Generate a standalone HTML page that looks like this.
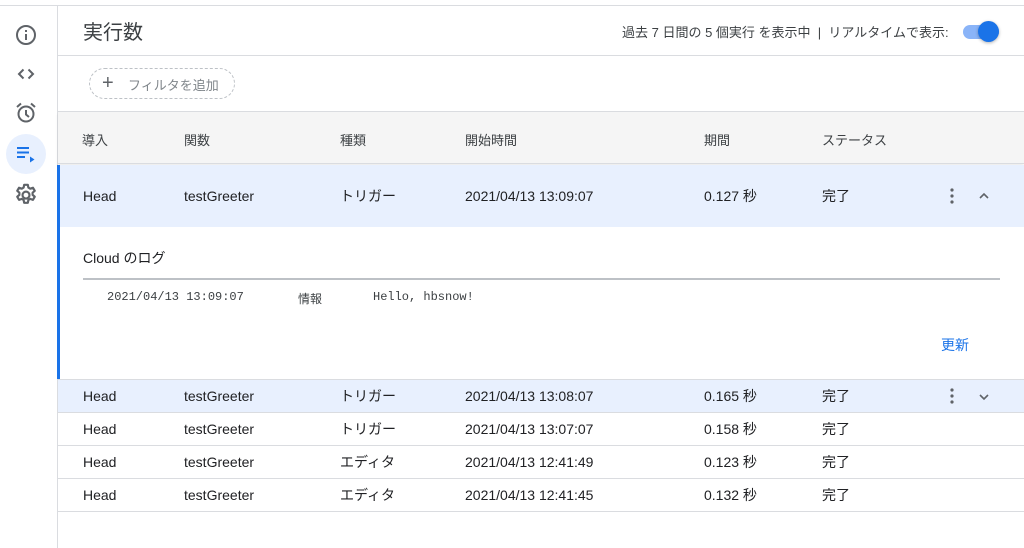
<!DOCTYPE html>
<html><head><meta charset="utf-8"><style>
*{box-sizing:border-box;margin:0;padding:0}
body{width:1024px;height:548px;background:#fff;font-family:"Liberation Sans","Noto Sans CJK JP",sans-serif;color:#202124;position:relative;overflow:hidden}
.abs{position:absolute}
.topline{left:0;top:5px;width:1024px;height:1px;background:#dadce0}
.side{left:57px;top:6px;width:1px;height:542px;background:#dadce0}
.t{position:absolute;font-size:14px;white-space:nowrap}
.hline{position:absolute;left:58px;width:966px;height:1px;background:#dadce0}
.ic{position:absolute}
</style></head><body>
<div class="abs topline"></div>
<div class="abs side"></div>
<svg class="ic" style="left:14px;top:23px" width="24" height="24" viewBox="0 0 24 24"><circle cx="12" cy="12" r="9" fill="none" stroke="#5f6368" stroke-width="2"/><rect x="11" y="11" width="2" height="6" fill="#5f6368"/><rect x="11" y="7" width="2" height="2" fill="#5f6368"/></svg>
<svg class="ic" style="left:14px;top:62px" width="24" height="24" viewBox="0 0 24 24"><path d="M9.5 7.5L5 12l4.5 4.5M14.5 7.5L19 12l-4.5 4.5" fill="none" stroke="#5f6368" stroke-width="2"/></svg>
<svg class="ic" style="left:14px;top:101px" width="24" height="24" viewBox="0 0 24 24"><circle cx="12" cy="13" r="7.5" fill="none" stroke="#5f6368" stroke-width="2"/><path d="M12 9v4.5l3 2.5M3 6l4-3.5M21 6l-4-3.5" fill="none" stroke="#5f6368" stroke-width="2"/></svg>
<div class="abs" style="left:6px;top:134px;width:40px;height:40px;border-radius:50%;background:#e8f0fe"></div>
<svg class="ic" style="left:14px;top:142px" width="24" height="24" viewBox="0 0 24 24"><path d="M3 6h12M3 10.5h12M3 15h8" stroke="#1a73e8" stroke-width="2"/><path d="M16 14.5v6l4.5-3z" fill="#1a73e8"/></svg>
<svg class="ic" style="left:13px;top:181px" width="26" height="26" viewBox="0 0 24 24"><g fill="none" stroke="#5f6368" stroke-width="2" stroke-linejoin="round"><path d="M10.3 2.5h3.4l.5 2.6 1.7 1 2.5-.9 1.7 2.9-2 1.7v2l2 1.7-1.7 2.9-2.5-.9-1.7 1-.5 2.6h-3.4l-.5-2.6-1.7-1-2.5.9-1.7-2.9 2-1.7v-2l-2-1.7 1.7-2.9 2.5.9 1.7-1z" transform="translate(0,1)"/><circle cx="12" cy="13" r="3.2"/></g></svg>
<div class="t" style="left:83px;top:16px;font-size:20px;color:#3c4043">実行数</div>
<div class="t" style="left:622px;top:22px;font-size:13px;color:#3c4043">過去 7 日間の 5 個実行 を表示中 &nbsp;| &nbsp;リアルタイムで表示:</div>
<div class="abs" style="left:963px;top:25px;width:36px;height:14px;border-radius:7px;background:#8ab4f8"></div>
<div class="abs" style="left:978px;top:21px;width:21px;height:21px;border-radius:50%;background:#1a73e8;box-shadow:0 1px 3px rgba(0,0,0,.3)"></div>
<div class="hline" style="top:55px"></div>
<div class="abs" style="left:89px;top:68px;width:146px;height:31px;border:1px dashed #bdc1c6;border-radius:16px"></div>
<div class="t" style="left:102px;top:72px;font-size:20px;color:#5f6368;font-weight:300">+</div>
<div class="t" style="left:128px;top:75px;font-size:13px;color:#80868b">フィルタを追加</div>
<div class="hline" style="top:111px"></div>
<div class="abs" style="left:58px;top:112px;width:966px;height:52px;background:#f5f5f5;border-bottom:1px solid #dadce0;box-shadow:0 2px 3px rgba(0,0,0,.08)"></div>
<div class="t" style="left:82px;top:130px;font-size:13px;color:#3c4043">導入</div>
<div class="t" style="left:184px;top:130px;font-size:13px;color:#3c4043">関数</div>
<div class="t" style="left:340px;top:130px;font-size:13px;color:#3c4043">種類</div>
<div class="t" style="left:465px;top:130px;font-size:13px;color:#3c4043">開始時間</div>
<div class="t" style="left:704px;top:130px;font-size:13px;color:#3c4043">期間</div>
<div class="t" style="left:822px;top:130px;font-size:13px;color:#3c4043">ステータス</div>
<div class="abs" style="left:58px;top:165px;width:966px;height:62px;background:#e8f0fe"></div>
<div class="abs" style="left:57px;top:165px;width:3px;height:214px;background:#1a73e8"></div>
<div class="t" style="left:83px;top:188px">Head</div>
<div class="t" style="left:184px;top:188px">testGreeter</div>
<div class="t" style="left:340px;top:186px">トリガー</div>
<div class="t" style="left:465px;top:188px">2021/04/13 13:09:07</div>
<div class="t" style="left:704px;top:186px">0.127 秒</div>
<div class="t" style="left:822px;top:186px">完了</div>
<svg class="ic" style="left:944px;top:186px" width="16" height="20"><circle cx="8" cy="4" r="1.6" fill="#5f6368"/><circle cx="8" cy="10" r="1.6" fill="#5f6368"/><circle cx="8" cy="16" r="1.6" fill="#5f6368"/></svg>
<svg class="ic" style="left:976px;top:189px" width="16" height="14"><path d="M4 9l4-4 4 4" fill="none" stroke="#5f6368" stroke-width="1.6"/></svg>
<div class="t" style="left:83px;top:248px">Cloud のログ</div>
<div class="abs" style="left:83px;top:278px;width:917px;height:2px;background:#bdc1c6"></div>
<div class="t" style="left:107px;top:290px;font-size:12px;font-family:'Liberation Mono',monospace;color:#3c4043">2021/04/13 13:09:07</div>
<div class="t" style="left:298px;top:290px;font-size:12px;color:#3c4043">情報</div>
<div class="t" style="left:373px;top:290px;font-size:12px;font-family:'Liberation Mono',monospace;color:#3c4043">Hello, hbsnow!</div>
<div class="t" style="left:941px;top:335px;color:#1a73e8">更新</div>
<div class="hline" style="top:379px"></div>
<div class="abs" style="left:58px;top:380px;width:966px;height:32px;background:#e8f0fe"></div>
<div class="hline" style="top:412px"></div>
<div class="hline" style="top:445px"></div>
<div class="hline" style="top:478px"></div>
<div class="hline" style="top:511px"></div>
<div class="t" style="left:83px;top:388px">Head</div><div class="t" style="left:184px;top:388px">testGreeter</div><div class="t" style="left:340px;top:386px">トリガー</div><div class="t" style="left:465px;top:388px">2021/04/13 13:08:07</div><div class="t" style="left:704px;top:386px">0.165 秒</div><div class="t" style="left:822px;top:386px">完了</div>
<svg class="ic" style="left:944px;top:386px" width="16" height="20"><circle cx="8" cy="4" r="1.6" fill="#5f6368"/><circle cx="8" cy="10" r="1.6" fill="#5f6368"/><circle cx="8" cy="16" r="1.6" fill="#5f6368"/></svg>
<svg class="ic" style="left:976px;top:390px" width="16" height="14"><path d="M4 5l4 4 4-4" fill="none" stroke="#5f6368" stroke-width="1.6"/></svg>
<div class="t" style="left:83px;top:421px">Head</div><div class="t" style="left:184px;top:421px">testGreeter</div><div class="t" style="left:340px;top:419px">トリガー</div><div class="t" style="left:465px;top:421px">2021/04/13 13:07:07</div><div class="t" style="left:704px;top:419px">0.158 秒</div><div class="t" style="left:822px;top:419px">完了</div>
<div class="t" style="left:83px;top:454px">Head</div><div class="t" style="left:184px;top:454px">testGreeter</div><div class="t" style="left:340px;top:452px">エディタ</div><div class="t" style="left:465px;top:454px">2021/04/13 12:41:49</div><div class="t" style="left:704px;top:452px">0.123 秒</div><div class="t" style="left:822px;top:452px">完了</div>
<div class="t" style="left:83px;top:487px">Head</div><div class="t" style="left:184px;top:487px">testGreeter</div><div class="t" style="left:340px;top:485px">エディタ</div><div class="t" style="left:465px;top:487px">2021/04/13 12:41:45</div><div class="t" style="left:704px;top:485px">0.132 秒</div><div class="t" style="left:822px;top:485px">完了</div>
</body></html>
